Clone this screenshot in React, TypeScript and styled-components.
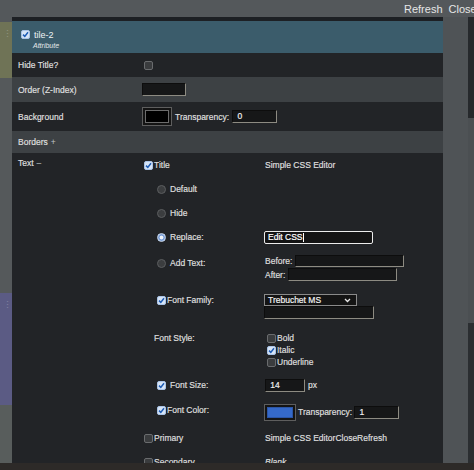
import React from 'react';
import styled, { createGlobalStyle } from 'styled-components';

const GlobalStyle = createGlobalStyle`
  html, body {
    margin: 0;
    padding: 0;
    background: #515558;
  }
  body {
    font-family: "Liberation Sans", Arial, sans-serif;
    overflow: hidden;
  }
`;

// page frame

const Page = styled.div`
  width: 474px;
  height: 470px;
  display: grid;
  grid-template-rows: 17px 446px 7px;
  background: #515558;
  overflow: hidden;
`;

const TopBar = styled.div`
  display: flex;
  align-items: center;
  gap: 6px;
  padding-left: 404px;
  background: #54585b;
  color: #e6e6e6;
  font-size: 11px;
  white-space: nowrap;
  overflow: hidden;
`;

const TopLink = styled.span`
  cursor: pointer;
`;

const Middle = styled.div`
  display: grid;
  grid-template-columns: 12px 431px 25px 6px;
  overflow: hidden;
`;

const Strip = styled.div<{ $rows: string }>`
  display: grid;
  grid-template-rows: ${({ $rows }) => $rows};
`;

const Patch = styled.div<{ $c: string }>`
  background: ${({ $c }) => $c};
  color: rgba(255, 255, 255, 0.25);
  font-size: 9px;
  line-height: 9px;
  padding: 8px 0 0 3px;
  overflow: hidden;
`;

const Gutter = styled.div`
  background: #4f5356;
`;

const BottomBar = styled.div`
  background: #2d2a28;
`;

// panel

const Panel = styled.div`
  display: flex;
  flex-direction: column;
  background: #222427;
  border-top: 4px solid #1d2024;
  overflow: hidden;
  color: #dedede;
  font-size: 8.5px;
  -webkit-text-stroke: 0.2px currentColor;
`;

const HeaderRow = styled.div`
  height: 32px;
  flex: none;
  display: flex;
  align-items: flex-start;
  gap: 4px;
  padding: 9px 0 0 9px;
  box-sizing: border-box;
  background: #3b5c6b;
`;

const HeaderText = styled.div`
  display: flex;
  flex-direction: column;
`;

const HeaderTitle = styled.span`
  font-size: 9px;
  line-height: 10px;
  color: #eef2f4;
  -webkit-text-stroke: 0;
`;

const HeaderSub = styled.span`
  font-size: 7px;
  line-height: 8px;
  font-style: italic;
  margin: 2px 0 0 -1px;
  color: #e4e8ea;
  -webkit-text-stroke: 0;
`;

const PropRow = styled.div<{ $h?: number; $light?: boolean; $top?: boolean }>`
  flex: ${({ $h }) => ($h ? 'none' : '1')};
  height: ${({ $h }) => ($h ? `${$h}px` : 'auto')};
  display: grid;
  grid-template-columns: 124px 1fr;
  align-items: ${({ $top }) => ($top ? 'start' : 'center')};
  padding-left: 6px;
  background: ${({ $light }) => ($light ? '#3d4144' : '#222427')};
  overflow: hidden;
`;

const Label = styled.span<{ $pt?: number }>`
  line-height: 10px;
  padding-top: ${({ $pt }) => $pt ?? 0}px;
  white-space: nowrap;
`;

const Thin = styled.span`
  font-weight: 300;
  color: #bfc2c4;
  -webkit-text-stroke: 0;
  padding-left: 3px;
`;

const Inline = styled.div<{ $gap?: number; $indent?: number }>`
  display: flex;
  align-items: center;
  gap: ${({ $gap }) => $gap ?? 3}px;
  padding-left: ${({ $indent }) => $indent ?? 0}px;
  white-space: nowrap;
`;

// form bits

const Box = styled.span<{ $on?: boolean }>`
  width: 9px;
  height: 9px;
  flex: none;
  box-sizing: border-box;
  border-radius: 2px;
  border: 1px solid ${({ $on }) => ($on ? '#a9c3e6' : '#6a6c6e')};
  background: ${({ $on }) => ($on ? '#d6e4f6' : '#3a3c3e')};
  display: flex;
  align-items: center;
  justify-content: center;
`;

const Check = ({ on }: { on?: boolean }) => (
  <Box $on={on}>
    {on && (
      <svg width="7" height="7" viewBox="0 0 7 7">
        <path d="M1 3.6 L2.8 5.4 L6 1.2" fill="none" stroke="#1c5bb5" strokeWidth="1.5" />
      </svg>
    )}
  </Box>
);

const Radio = styled.span<{ $on?: boolean }>`
  width: 9px;
  height: 9px;
  flex: none;
  box-sizing: border-box;
  border-radius: 50%;
  border: 1px solid ${({ $on }) => ($on ? '#cddcf1' : '#5c5e60')};
  background: ${({ $on }) => ($on ? 'radial-gradient(circle, #f2f6fc 0 1.6px, #7fa2d8 2.2px)' : '#3b3d3f')};
`;

const TextInput = styled.div<{ $w: number; $h?: number }>`
  width: ${({ $w }) => $w}px;
  height: ${({ $h }) => $h ?? 13}px;
  box-sizing: border-box;
  flex: none;
  background: #161718;
  border-top: 1px solid #0d0d0d;
  border-left: 1px solid #0d0d0d;
  border-right: 1px solid #8d8b82;
  border-bottom: 1px solid #8d8b82;
  color: #f0f0f0;
  font-size: 8.5px;
  line-height: 11px;
  padding-left: 2px;
`;

const FocusInput = styled.div`
  width: 109px;
  height: 13px;
  box-sizing: border-box;
  border: 1px solid #ececec;
  border-radius: 2px;
  background: #141414;
  color: #ffffff;
  font-size: 8.5px;
  line-height: 11px;
  padding-left: 3px;
  display: flex;
  align-items: center;
`;

const Caret = styled.span`
  width: 1px;
  height: 9px;
  background: #ffffff;
`;

const Select = styled.div`
  width: 93px;
  height: 12px;
  box-sizing: border-box;
  border: 1px solid #8a8a8a;
  background: #141414;
  color: #f2f2f2;
  font-size: 8.5px;
  display: flex;
  align-items: center;
  justify-content: space-between;
  padding: 0 5px 0 3px;
`;

const Swatch = styled.div<{ $w: number; $h: number }>`
  width: ${({ $w }) => $w}px;
  height: ${({ $h }) => $h}px;
  box-sizing: border-box;
  flex: none;
  border: 1px solid #5e5e5e;
  background: #141414;
  padding: 2px;
  display: flex;
`;

const SwatchFill = styled.div<{ $c: string }>`
  flex: 1;
  background: ${({ $c }) => $c};
  border: 1px solid ${({ $c }) => ($c === '#000' ? '#6c6c6c' : '#2b55a6')};
`;

// text section

const TextBody = styled.div`
  display: flex;
  flex-direction: column;
`;

const SubRow = styled.div<{ $h: number; $mt: number; $top?: boolean }>`
  display: grid;
  grid-template-columns: 122px 1fr;
  height: ${({ $h }) => $h}px;
  margin-top: ${({ $mt }) => $mt}px;
  align-items: ${({ $top }) => ($top ? 'start' : 'center')};
`;

const Opt = styled.div<{ $indent: number; $gap: number; $mt?: number }>`
  display: flex;
  align-items: center;
  gap: ${({ $gap }) => $gap}px;
  padding-left: ${({ $indent }) => $indent}px;
  margin-top: ${({ $mt }) => $mt ?? 0}px;
  line-height: 10px;
  white-space: nowrap;
`;

const Stack = styled.div<{ $gap?: number }>`
  display: flex;
  flex-direction: column;
  gap: ${({ $gap }) => $gap ?? 0}px;
`;

const StyleLine = styled.div`
  display: flex;
  align-items: center;
  gap: 1px;
  height: 12px;
  padding-left: 3px;
`;

const Italic = styled.span`
  font-style: italic;
  padding-left: 1px;
`;

const App: React.FC = () => {
  return (
    <>
      <GlobalStyle />
      <Page>
        <TopBar>
          <TopLink>Refresh</TopLink>
          <TopLink>Close</TopLink>
        </TopBar>
        <Middle>
          <Strip $rows="5px 56px 215px 112px 1fr">
            <Patch $c="#54585b" />
            <Patch $c="#6f7356">⋮</Patch>
            <Patch $c="#55595b" />
            <Patch $c="#5b5b84">⋮</Patch>
            <Patch $c="#585d5c" />
          </Strip>

          <Panel>
            <HeaderRow>
              <Check on />
              <HeaderText>
                <HeaderTitle>tile-2</HeaderTitle>
                <HeaderSub>Attribute</HeaderSub>
              </HeaderText>
            </HeaderRow>

            <PropRow $h={24}>
              <Label>Hide Title?</Label>
              <Inline $indent={2}>
                <Check />
              </Inline>
            </PropRow>

            <PropRow $h={25} $light>
              <Label>Order (Z-Index)</Label>
              <Inline>
                <TextInput $w={44} />
              </Inline>
            </PropRow>

            <PropRow $h={29}>
              <Label>Background</Label>
              <Inline>
                <Swatch $w={30} $h={19}>
                  <SwatchFill $c="#000" />
                </Swatch>
                Transparency:
                <TextInput $w={45}>&nbsp;0</TextInput>
              </Inline>
            </PropRow>

            <PropRow $h={22} $light>
              <Label>
                Borders<Thin>+</Thin>
              </Label>
            </PropRow>

            <PropRow $top>
              <Label $pt={5}>
                Text<Thin>–</Thin>
              </Label>
              <TextBody>
                <SubRow $h={18} $mt={3}>
                  <Opt $indent={2} $gap={1}>
                    <Check on />
                    Title
                  </Opt>
                  <Opt $indent={1} $gap={0}>Simple CSS Editor</Opt>
                </SubRow>

                <SubRow $h={18} $mt={6}>
                  <Opt $indent={15} $gap={4}>
                    <Radio />
                    Default
                  </Opt>
                </SubRow>

                <SubRow $h={18} $mt={6}>
                  <Opt $indent={15} $gap={4}>
                    <Radio />
                    Hide
                  </Opt>
                </SubRow>

                <SubRow $h={18} $mt={6}>
                  <Opt $indent={15} $gap={4}>
                    <Radio $on />
                    Replace:
                  </Opt>
                  <FocusInput>
                    Edit CSS
                    <Caret />
                  </FocusInput>
                </SubRow>

                <SubRow $h={28} $mt={9} $top>
                  <Opt $indent={15} $gap={4} $mt={3}>
                    <Radio />
                    Add Text:
                  </Opt>
                  <Stack $gap={1}>
                    <Inline $gap={3} $indent={1}>
                      Before:
                      <TextInput $w={109} $h={12} />
                    </Inline>
                    <Inline $gap={3} $indent={1}>
                      After:
                      <TextInput $w={109} $h={13} />
                    </Inline>
                  </Stack>
                </SubRow>

                <SubRow $h={25} $mt={11} $top>
                  <Opt $indent={15} $gap={1} $mt={1}>
                    <Check on />
                    Font Family:
                  </Opt>
                  <Stack>
                    <Select>
                      Trebuchet MS
                      <svg width="7" height="5" viewBox="0 0 7 5">
                        <path d="M1 1 L3.5 3.5 L6 1" fill="none" stroke="#e8e8e8" strokeWidth="1.3" />
                      </svg>
                    </Select>
                    <TextInput $w={110} $h={13} />
                  </Stack>
                </SubRow>

                <SubRow $h={36} $mt={13} $top>
                  <Opt $indent={12} $gap={0} $mt={1}>Font Style:</Opt>
                  <Stack>
                    <StyleLine>
                      <Check />
                      Bold
                    </StyleLine>
                    <StyleLine>
                      <Check on />
                      Italic
                    </StyleLine>
                    <StyleLine>
                      <Check />
                      Underline
                    </StyleLine>
                  </Stack>
                </SubRow>

                <SubRow $h={14} $mt={10}>
                  <Opt $indent={15} $gap={4}>
                    <Check on />
                    Font Size:
                  </Opt>
                  <Inline $gap={3} $indent={1}>
                    <TextInput $w={40}>&nbsp;14</TextInput>
                    px
                  </Inline>
                </SubRow>

                <SubRow $h={18} $mt={11}>
                  <Opt $indent={15} $gap={1} $mt={-4}>
                    <Check on />
                    Font Color:
                  </Opt>
                  <Inline $gap={2}>
                    <Swatch $w={32} $h={17}>
                      <SwatchFill $c="#3569c9" />
                    </Swatch>
                    Transparency:
                    <TextInput $w={45} $h={13}>
                      &nbsp;1
                    </TextInput>
                  </Inline>
                </SubRow>

                <SubRow $h={14} $mt={10}>
                  <Opt $indent={2} $gap={1}>
                    <Check />
                    Primary
                  </Opt>
                  <Opt $indent={1} $gap={0}>Simple CSS EditorCloseRefresh</Opt>
                </SubRow>

                <SubRow $h={14} $mt={10}>
                  <Opt $indent={2} $gap={1}>
                    <Check />
                    Secondary
                  </Opt>
                  <Opt $indent={0} $gap={0}>
                    <Italic>Blank</Italic>
                  </Opt>
                </SubRow>
              </TextBody>
            </PropRow>
          </Panel>

          <Gutter />
          <Strip $rows="101px 205px 1fr">
            <Patch $c="#26292c" />
            <Patch $c="#4b4f52" />
            <Patch $c="#2b2e31" />
          </Strip>
        </Middle>
        <BottomBar />
      </Page>
    </>
  );
};

export default App;
